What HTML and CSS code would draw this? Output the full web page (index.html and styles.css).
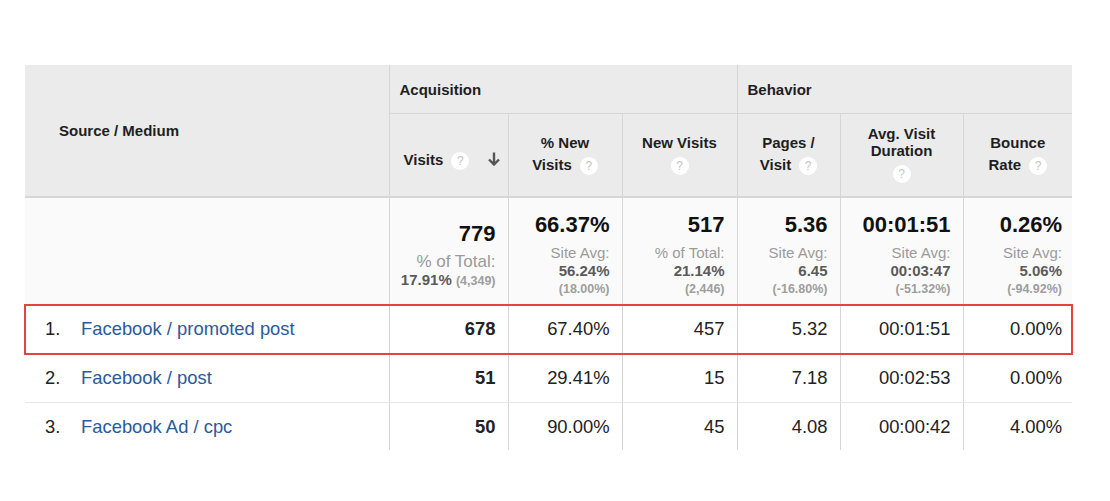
FILE: index.html
```html
<!DOCTYPE html>
<html>
<head>
<meta charset="utf-8">
<link rel="stylesheet" href="styles.css">
</head>
<body>
<div class="page">
  <table class="report">
    <colgroup>
      <col class="c-src"><col class="c-visits"><col class="c-pnew"><col class="c-new"><col class="c-pages"><col class="c-dur"><col class="c-bounce">
    </colgroup>
    <thead>
      <tr class="group-row">
        <th rowspan="2" class="src-head">Source / Medium</th>
        <th colspan="3" class="group">Acquisition</th>
        <th colspan="3" class="group">Behavior</th>
      </tr>
      <tr class="metric-row">
        <th class="metric">
          <div class="visits-head">
            <span>Visits<span class="q">?</span></span>
            <svg class="sort" width="12" height="14" viewBox="0 0 12 14"><path d="M6 0.5V12.5M1 7.5L6 12.5L11 7.5" fill="none" stroke="#555" stroke-width="2.4"/></svg>
          </div>
        </th>
        <th class="metric center">% New<br>Visits<span class="q">?</span></th>
        <th class="metric center">New Visits<br><span class="q solo">?</span></th>
        <th class="metric center">Pages /<br>Visit<span class="q">?</span></th>
        <th class="metric center">Avg. Visit<br>Duration<br><span class="q solo">?</span></th>
        <th class="metric center">Bounce<br>Rate<span class="q">?</span></th>
      </tr>
    </thead>
    <tbody>
      <tr class="totals">
        <td></td>
        <td><div class="big">779</div><div class="sub lead">% of Total:</div><div class="sub"><b>17.91%</b> <span class="paren">(4,349)</span></div></td>
        <td><div class="big">66.37%</div><div class="sub">Site Avg:</div><div class="sub"><b>56.24%</b></div><div class="sub paren">(18.00%)</div></td>
        <td><div class="big">517</div><div class="sub">% of Total:</div><div class="sub"><b>21.14%</b></div><div class="sub paren">(2,446)</div></td>
        <td><div class="big">5.36</div><div class="sub">Site Avg:</div><div class="sub"><b>6.45</b></div><div class="sub paren">(-16.80%)</div></td>
        <td><div class="big">00:01:51</div><div class="sub">Site Avg:</div><div class="sub"><b>00:03:47</b></div><div class="sub paren">(-51.32%)</div></td>
        <td><div class="big">0.26%</div><div class="sub">Site Avg:</div><div class="sub"><b>5.06%</b></div><div class="sub paren">(-94.92%)</div></td>
      </tr>
      <tr class="data highlight">
        <td class="src"><span class="idx">1.</span><a class="link">Facebook / promoted post</a></td>
        <td class="strong">678</td><td>67.40%</td><td>457</td><td>5.32</td><td>00:01:51</td><td>0.00%</td>
      </tr>
      <tr class="data">
        <td class="src"><span class="idx">2.</span><a class="link">Facebook / post</a></td>
        <td class="strong">51</td><td>29.41%</td><td>15</td><td>7.18</td><td>00:02:53</td><td>0.00%</td>
      </tr>
      <tr class="data last">
        <td class="src"><span class="idx">3.</span><a class="link">Facebook Ad / cpc</a></td>
        <td class="strong">50</td><td>90.00%</td><td>45</td><td>4.08</td><td>00:00:42</td><td>4.00%</td>
      </tr>
    </tbody>
  </table>
</div>
</body>
</html>
```

FILE: styles.css
```css
html, body {
  margin: 0;
  padding: 0;
  background: #ffffff;
}

.page {
  padding: 65px 0 0 25px;
  font-family: "Liberation Sans", Arial, sans-serif;
  color: #222;
}

.report {
  border-collapse: collapse;
  table-layout: fixed;
  width: 1047px;
}

.c-src { width: 364px; }
.c-visits { width: 119px; }
.c-pnew { width: 114px; }
.c-new { width: 115px; }
.c-pages { width: 103px; }
.c-dur { width: 123px; }
.c-bounce { width: 109px; }

.report th {
  background: #ebebeb;
  font-size: 15px;
  font-weight: bold;
  color: #1e1e1e;
  line-height: 17px;
  border-left: 1px solid #d6d6d6;
  padding: 0;
}

.report th:first-child { border-left: none; }

.group-row th { height: 48px; }

.src-head {
  text-align: left;
  padding-left: 34px !important;
  vertical-align: middle;
  border-bottom: 2px solid #d6d6d6;
}

.group {
  text-align: left;
  padding-left: 10px !important;
  border-bottom: 1px solid #d6d6d6;
}

.metric-row th {
  height: 74px;
  padding: 6px 8px 2px 8px;
  vertical-align: middle;
  border-bottom: 2px solid #d6d6d6;
}

.metric-row th.metric:first-child { border-left: 1px solid #d6d6d6; }

.metric.center { text-align: center; }

.metric-row th:first-of-type {
  text-align: left;
  padding-left: 14px;
}

.visits-head {
  display: flex;
  justify-content: space-between;
  align-items: center;
  padding-top: 7px;
}

.sort { display: block; margin-top: -4px; }

.q {
  display: inline-block;
  width: 18px;
  height: 18px;
  line-height: 18px;
  border-radius: 50%;
  background: #fff;
  color: #c4c4c4;
  font-size: 12px;
  font-weight: normal;
  text-align: center;
  vertical-align: middle;
  margin: 6px 0 6px 8px;
}

.q.solo { margin-left: 0; }

.report td {
  border-left: 1px solid #d6d6d6;
  text-align: right;
  padding: 0 12px 0 8px;
  font-size: 18.4px;
  color: #222;
}

.report td:first-child { border-left: none; }
.report td:last-child { padding-right: 10px; }

.totals td {
  background: #fafafa;
  height: 94px;
  padding-top: 10px;
  padding-bottom: 2px;
  vertical-align: middle;
  border-bottom: 1px solid #e3e3e3;
}

.big {
  font-size: 22px;
  font-weight: bold;
  line-height: 26px;
  margin-bottom: 6px;
  color: #111;
}

.sub {
  font-size: 15px;
  line-height: 18px;
  color: #9a9a9a;
}

.sub.lead { font-size: 17px; }

.sub b { color: #5a5a5a; }

.paren {
  font-size: 12.5px;
  font-weight: bold;
  color: #9e9e9e;
}

.data td {
  height: 48px;
  border-bottom: 1px solid #e6e6e6;
  vertical-align: middle;
}

.data.last td { border-bottom: none; height: 47px; }

.data td.src {
  text-align: left;
  padding-left: 20px;
}

.idx {
  display: inline-block;
  width: 36px;
}

.link {
  color: #2b5a9c;
  text-decoration: none;
}

.strong { font-weight: bold; }

.highlight {
  outline: 2px solid #e5443d;
  outline-offset: -1px;
}
```
